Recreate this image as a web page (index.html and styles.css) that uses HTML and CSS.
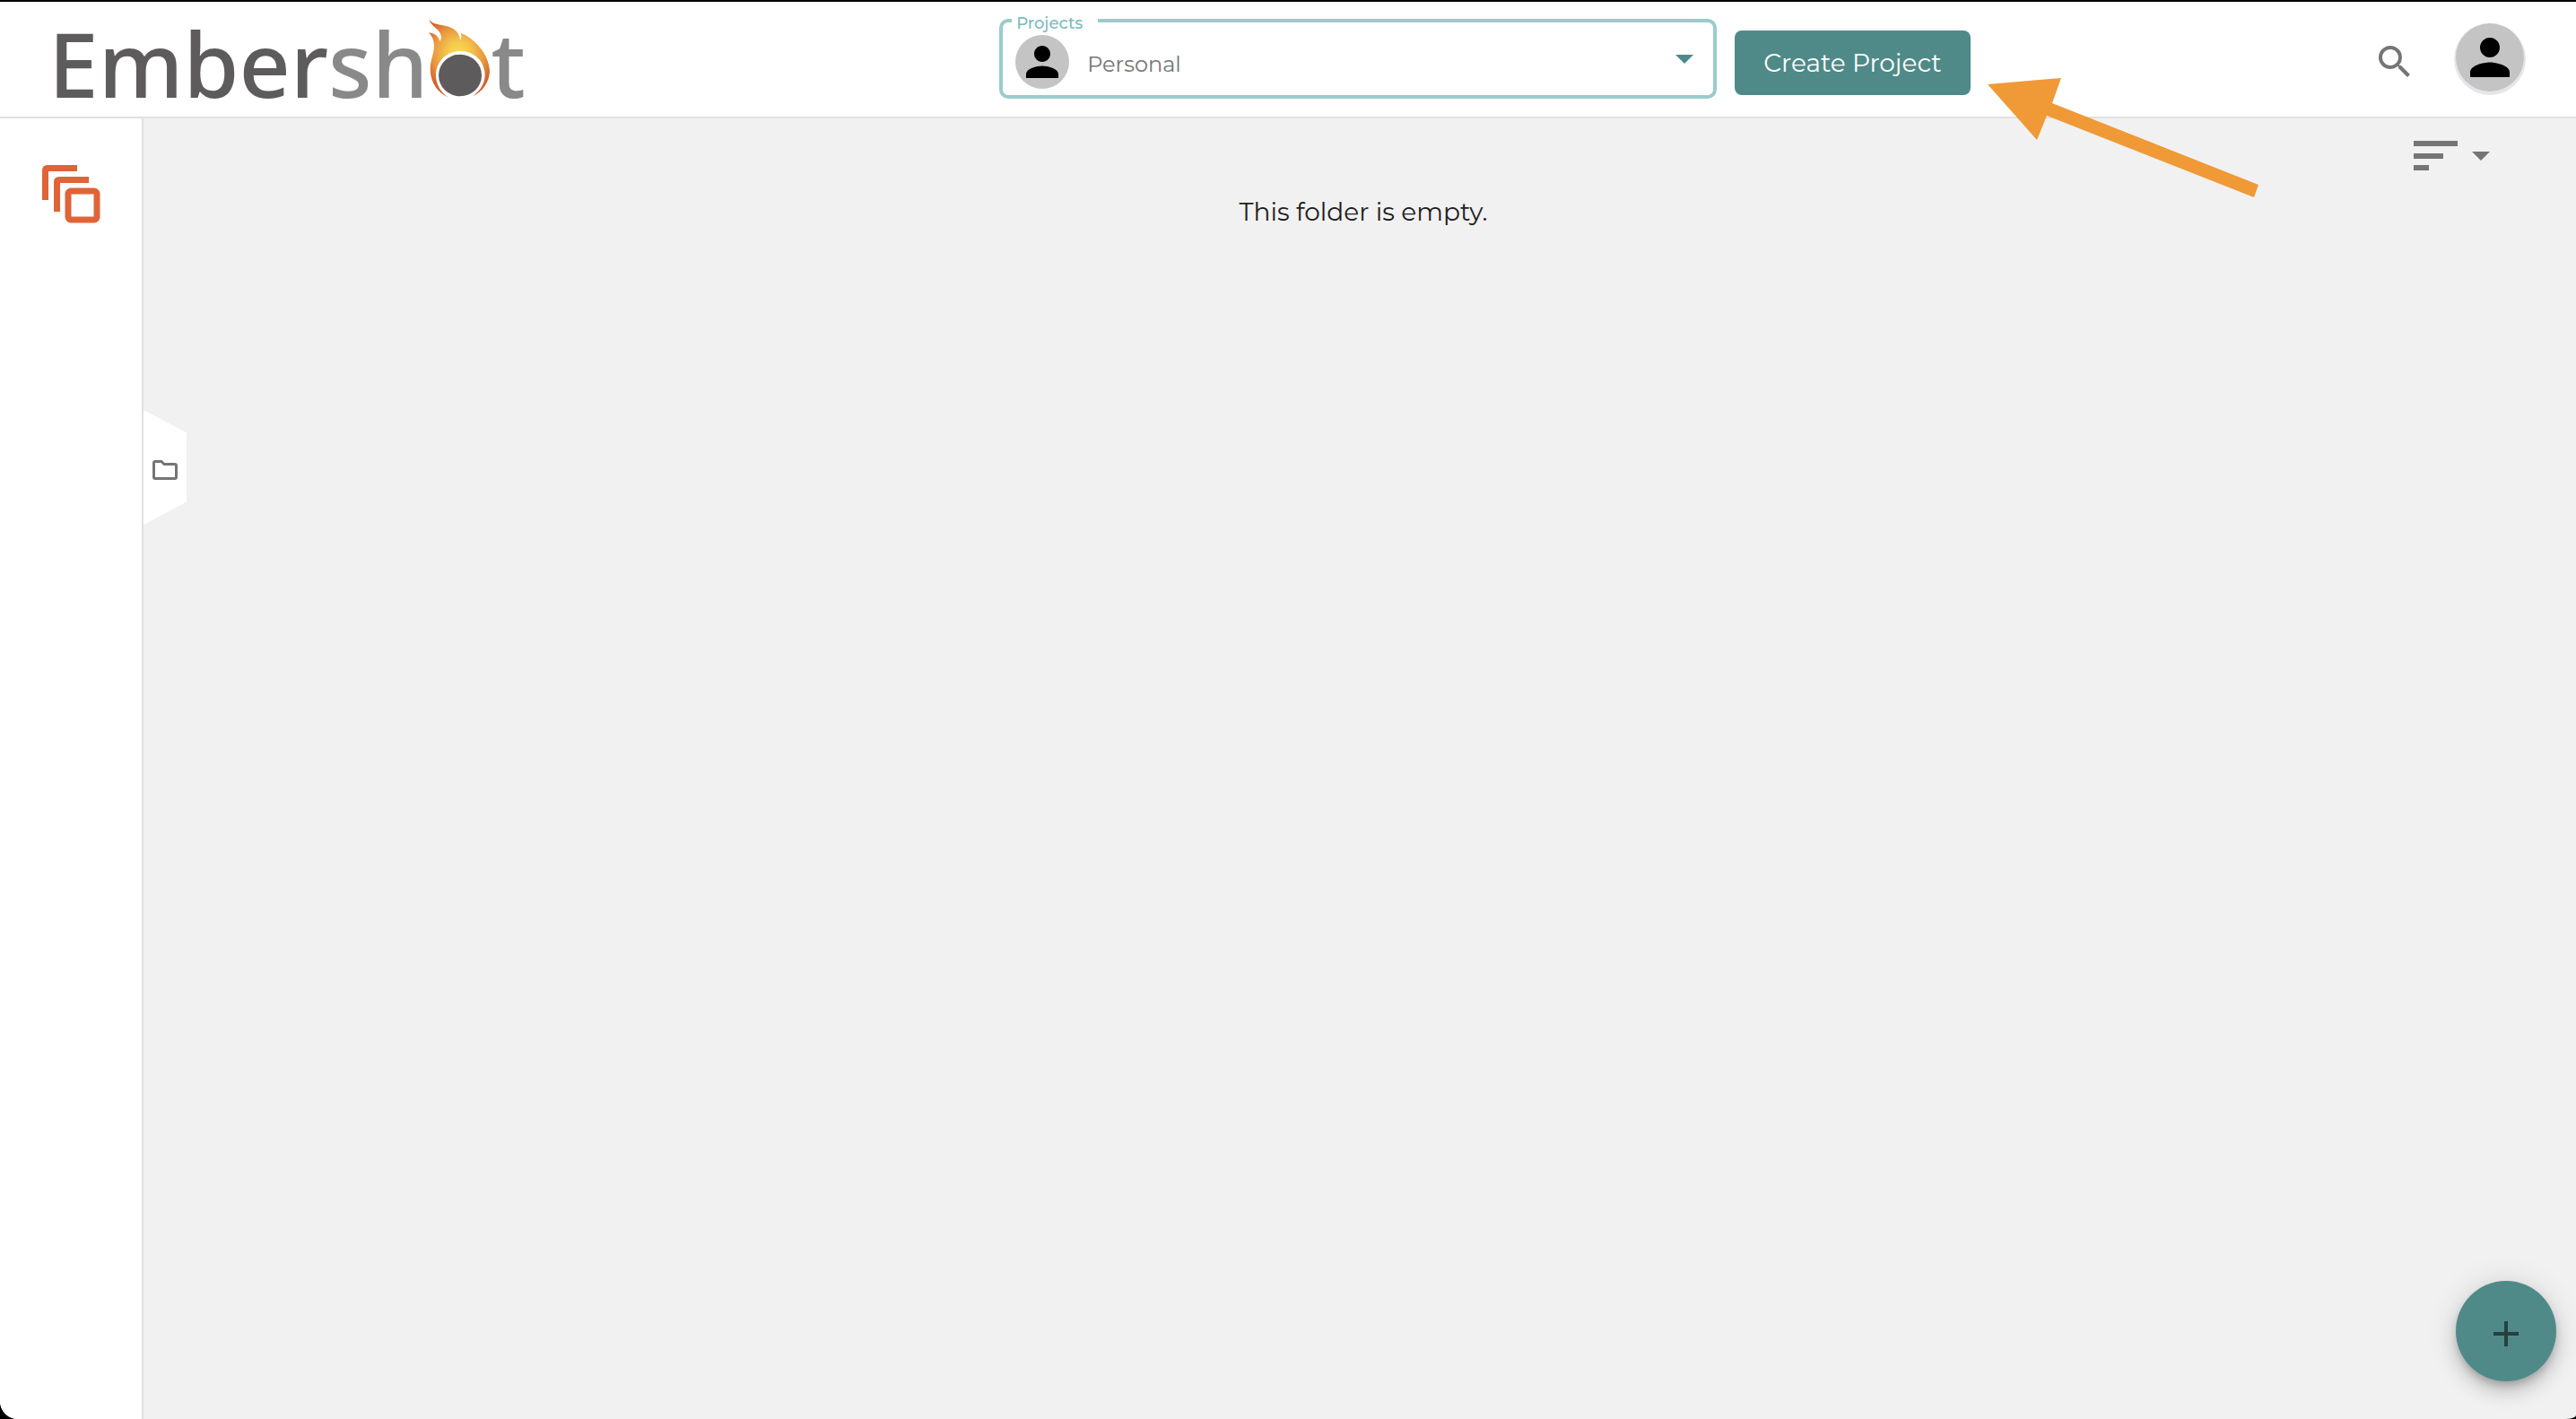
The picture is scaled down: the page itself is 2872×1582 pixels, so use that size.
FILE: index.html
```html
<!DOCTYPE html>
<html lang="en">
  <head>
    <meta charset="UTF-8" />
    <meta name="viewport" content="width=device-width, initial-scale=1.0" />
    <title>Embershot</title>
    <link rel="stylesheet" href="styles.css">
  </head>

  <body>
    <div class="app">
      <header class="header">
        <a class="logo" href="#" aria-label="Embershot">
          <span class="logo-dark">Ember</span><span class="logo-light">sh</span><svg class="logo-flame" viewBox="75 35 210 264" aria-hidden="true">
            <defs>
              <radialGradient id="flame" gradientUnits="userSpaceOnUse" cx="178" cy="150" r="125">
                <stop offset="0" stop-color="#fbdc4e" />
                <stop offset="0.3" stop-color="#f4c84c" />
                <stop offset="0.7" stop-color="#e8963f" />
                <stop offset="1" stop-color="#d4632f" />
              </radialGradient>
            </defs>
            <path fill="url(#flame)" d="M79 37 C92 54 112 53 132 58 C157 63 180 75 183 106 C188 98 188 91 185 82 C232 101 278 150 282 208 C281 246 258 280 224 294 C250 276 266 250 266 223 C266 176 229 143 183 143 C138 143 102 178 102 223 C102 255 120 283 145 298 C108 283 84 247 83 205 C82 177 96 152 96 126 C96 106 88 91 77 81 C98 83 112 94 115 110 C122 102 121 89 113 78 C104 65 84 55 79 37 Z" />
            <ellipse cx="183" cy="224" rx="72" ry="70" fill="#5e5b5c" />
          </svg><span class="logo-light">t</span>
        </a>

        <div class="projects">
          <fieldset class="project-field">
            <legend><label for="projectSelect">Projects</label></legend>
            <div class="project-row">
              <span class="avatar avatar-small">
                <svg viewBox="4 4 16 16" aria-hidden="true"><path d="M12 12c2.21 0 4-1.79 4-4s-1.79-4-4-4-4 1.79-4 4 1.79 4 4 4zm0 2c-2.67 0-8 1.34-8 4v2h16v-2c0-2.66-5.33-4-8-4z" /></svg>
              </span>
              <select id="projectSelect" class="project-select">
                <option>Personal</option>
              </select>
              <svg class="project-caret" viewBox="0 0 20 10" aria-hidden="true"><path d="M0 0h20L10 10z" /></svg>
            </div>
          </fieldset>
          <button type="button" class="create-button">Create Project</button>
        </div>

        <div class="header-actions">
          <button type="button" class="icon-button search-button" aria-label="Search">
            <svg viewBox="0 0 24 24" aria-hidden="true"><path d="M15.5 14h-.79l-.28-.27A6.471 6.471 0 0 0 16 9.5 6.5 6.5 0 1 0 9.5 16c1.61 0 3.09-.59 4.23-1.57l.27.28v.79l5 4.99L20.49 19l-4.99-5zm-6 0C7.01 14 5 11.99 5 9.5S7.01 5 9.5 5 14 7.01 14 9.5 11.99 14 9.5 14z" /></svg>
          </button>
          <button type="button" class="avatar avatar-large" aria-label="Account">
            <svg viewBox="4 4 16 16" aria-hidden="true"><path d="M12 12c2.21 0 4-1.79 4-4s-1.79-4-4-4-4 1.79-4 4 1.79 4 4 4zm0 2c-2.67 0-8 1.34-8 4v2h16v-2c0-2.66-5.33-4-8-4z" /></svg>
          </button>
        </div>
      </header>

      <div class="body">
        <nav class="sidebar">
          <a href="#" aria-label="Collections">
            <svg class="stack-icon" viewBox="0 0 65 65" aria-hidden="true">
              <path d="M39 0H6Q0 0 0 6V39H7V7H39z" />
              <path d="M52 13H19Q13 13 13 19V52H20V20H52z" />
              <rect x="29" y="29" width="32" height="32" rx="3" />
            </svg>
          </a>
        </nav>

        <main class="content">
          <button type="button" class="folder-tab" aria-label="Folders">
            <svg viewBox="0 0 28 22" aria-hidden="true"><path d="M3 1.5H10L13 4.5H25Q26.5 4.5 26.5 6V19Q26.5 20.5 25 20.5H3Q1.5 20.5 1.5 19V3Q1.5 1.5 3 1.5z" /></svg>
          </button>
          <div class="toolbar">
            <button type="button" class="icon-button sort-button" aria-label="Sort">
              <svg class="sort-icon" viewBox="0 0 49 34" aria-hidden="true"><path d="M0 0h49v6H0zM0 14h33v6H0zM0 27h17v6H0z" /></svg>
              <svg class="sort-caret" viewBox="0 0 20 10" aria-hidden="true"><path d="M0 0h20L10 10z" /></svg>
            </button>
          </div>
          <p class="empty-text">This folder is empty.</p>
        </main>
      </div>

      <svg class="arrow" viewBox="0 0 302 133" aria-hidden="true"><path d="M0 7L82 0L72 28L302 119L297 133L66 42L55 69z" /></svg>

      <button type="button" class="add-button" aria-label="Add">
        <svg viewBox="0 0 28 28" aria-hidden="true"><path d="M12 0h4v12h12v4H16v12h-4V16H0v-4h12z" /></svg>
      </button>
    </div>
  </body>
</html>
```
FILE: styles.css
```css
/* General page settings */
html {
  background-color: #000;
}

body {
  margin: 0;
  font-family: Montserrat, Inter, sans-serif;
  color: #1e1e1e;
}

button {
  border: none;
  padding: 0;
  font-family: inherit;
  cursor: pointer;
}

svg {
  display: block;
}

.app {
  position: relative;
  display: flex;
  flex-direction: column;
  height: 100vh;
  box-sizing: border-box;
  border-top: 2px solid #000;
  border-radius: 0 0 12px 20px / 0 0 4px 20px;
  overflow: hidden;
  background-color: #f1f1f1;
}

/* Header */
.header {
  display: grid;
  grid-template-columns: 1.65fr auto 1fr;
  grid-template-rows: 128px;
  align-items: center;
  border-bottom: 2px solid #e0e0e0;
  background-color: #fff;
}

.logo {
  display: flex;
  align-items: baseline;
  align-self: start;
  padding-left: 54px;
  font-family: "Noto Sans", "Open Sans", sans-serif;
  font-size: 100px;
  font-weight: 500;
  line-height: 136px;
  text-decoration: none;
}

.logo-dark {
  color: #5e5b5c;
}

.logo-light {
  color: #898989;
}

.logo-flame {
  width: 70px;
  height: 88px;
  margin-bottom: -2px;
}

.projects {
  display: flex;
  align-items: center;
  gap: 20px;
}

.project-field {
  width: 800px;
  box-sizing: border-box;
  margin: 0 0 12px;
  padding: 3px 14px 7px;
  border: 4px solid #9acbcd;
  border-radius: 10px;
}

.project-field legend {
  margin-left: -4px;
  padding: 5px 17px 0 5px;
  font-size: 18px;
  font-weight: 500;
  line-height: 20px;
  color: #7dbcbf;
}

.project-row {
  position: relative;
  display: flex;
  align-items: center;
  gap: 20px;
}

.project-select {
  flex: 1;
  height: 60px;
  box-sizing: border-box;
  padding: 6px 0 0;
  border: none;
  outline: none;
  appearance: none;
  background: none;
  font-family: inherit;
  font-size: 24px;
  color: #757575;
}

.project-caret {
  position: absolute;
  right: 8px;
  width: 20px;
  height: 10px;
  margin-bottom: 6px;
  fill: #4f8a8b;
  pointer-events: none;
}

.create-button {
  height: 72px;
  margin-top: 8px;
  padding: 0 32px;
  border-radius: 8px;
  background-color: #4f8a89;
  color: #fff;
  font-size: 28px;
}

.header-actions {
  display: flex;
  justify-content: flex-end;
  align-items: center;
  gap: 44px;
  padding-right: 58px;
}

.icon-button {
  background: none;
  fill: #757575;
}

.search-button {
  margin-top: 6px;
}

.search-button svg {
  width: 48px;
  height: 48px;
}

.avatar {
  display: flex;
  justify-content: center;
  align-items: center;
  flex-shrink: 0;
  border-radius: 50%;
  background-color: #c4c4c4;
}

.avatar-small {
  width: 60px;
  height: 60px;
}

.avatar-small svg {
  width: 36px;
  height: 36px;
}

.avatar-large {
  width: 76px;
  height: 76px;
  margin-bottom: 4px;
  box-shadow: 0 2px 0 2px #e6e6ea;
}

.avatar-large svg {
  width: 44px;
  height: 44px;
}

/* Sidebar and content */
.body {
  display: flex;
  flex: 1;
}

.sidebar {
  width: 160px;
  box-sizing: border-box;
  padding: 52px 0 0 47px;
  border-right: 2px solid #e0e0e0;
  background-color: #fff;
}

.stack-icon {
  width: 65px;
  height: 65px;
  fill: #df6438;
}

.stack-icon rect {
  fill: none;
  stroke: #df6438;
  stroke-width: 7;
}

.content {
  position: relative;
  flex: 1;
}

.folder-tab {
  position: absolute;
  top: 325px;
  left: 0;
  display: flex;
  justify-content: center;
  align-items: center;
  width: 48px;
  height: 128px;
  background-color: #fff;
  clip-path: polygon(0 0, 100% 20%, 100% 80%, 0 100%);
}

.folder-tab svg {
  width: 28px;
  height: 22px;
  margin-top: 6px;
  fill: none;
  stroke: #757575;
  stroke-width: 3;
}

.toolbar {
  display: flex;
  justify-content: flex-end;
  padding: 25px 96px 0 0;
}

.sort-button {
  display: flex;
  align-items: center;
  gap: 16px;
}

.sort-icon {
  width: 49px;
  height: 34px;
}

.sort-caret {
  width: 20px;
  height: 10px;
}

.empty-text {
  margin: 28px 0 0;
  padding-left: 8px;
  font-size: 28px;
  line-height: 34px;
  text-align: center;
}

/* Pointer to the create button */
.arrow {
  position: absolute;
  top: 85px;
  left: 2216px;
  width: 302px;
  height: 133px;
  fill: #f09937;
  pointer-events: none;
}

.add-button {
  position: absolute;
  right: 22px;
  bottom: 42px;
  display: flex;
  justify-content: center;
  align-items: center;
  width: 112px;
  height: 112px;
  border-radius: 50%;
  background-color: #4f8a89;
  box-shadow: 0 6px 10px -2px rgba(0, 0, 0, 0.2), 0 12px 20px rgba(0, 0, 0, 0.14), 0 2px 36px rgba(0, 0, 0, 0.12);
}

.add-button svg {
  width: 28px;
  height: 28px;
  margin-top: 6px;
  fill: #26413f;
}
```
